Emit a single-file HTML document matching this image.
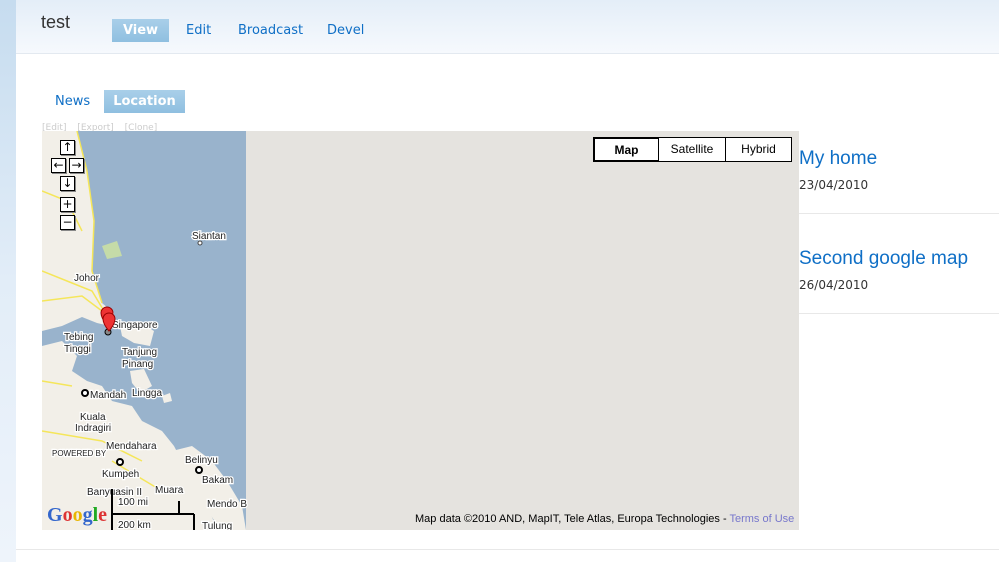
<!DOCTYPE html>
<html><head><meta charset="utf-8"><style>
*{margin:0;padding:0;box-sizing:border-box}
body{width:999px;height:562px;overflow:hidden;background:#fff;font-family:"DejaVu Sans","Liberation Sans",sans-serif;position:relative}
.strip{position:absolute;left:0;top:0;width:16px;height:562px;background:linear-gradient(#c6dcef,#e2edf8 50%,#eef4fb)}
.head{position:absolute;left:16px;top:0;width:983px;height:54px;background:linear-gradient(#e4eef8,#f6f9fd);border-bottom:1px solid #e3e9f0}
.a{position:absolute;font-size:13px;color:#0f6fc6}
.tab{position:absolute;background:linear-gradient(#a9cfe9,#8fbfe0);color:#fff;font-weight:bold;font-size:13px;text-align:center}
.map{position:absolute;left:42px;top:131px;width:757px;height:399px;background:#e5e3df;overflow:hidden}
.btn{position:absolute;width:15px;height:15px;background:#fff;border:1px solid #000;box-shadow:1px 1px 0 #888;font-size:12px;line-height:13px;text-align:center;font-family:"DejaVu Sans",sans-serif}
.mt{position:absolute;top:6px;height:25px;background:#fff;border:1px solid #000;font-family:"Liberation Sans",sans-serif;font-size:12px;text-align:center;line-height:22px}
.lbl{font-family:"Liberation Sans",sans-serif;font-size:10px;fill:#222;stroke:#fff;stroke-width:2.5px;paint-order:stroke}
</style></head><body>
<div class="strip"></div>
<div class="head"></div>
<div style="position:absolute;left:41px;top:12px;font-size:18px;color:#333;font-family:'Liberation Sans',sans-serif">test</div>
<div class="tab" style="left:112px;top:19px;width:57px;height:23px;line-height:23px">View</div>
<div class="a" style="left:186px;top:23px">Edit</div>
<div class="a" style="left:238px;top:23px">Broadcast</div>
<div class="a" style="left:327px;top:23px">Devel</div>
<div class="a" style="left:55px;top:94px">News</div>
<div class="tab" style="left:104px;top:90px;width:81px;height:23px;line-height:23px">Location</div>
<div style="position:absolute;left:42px;top:123px;font-size:9px;color:#ccc;word-spacing:8px">[Edit] [Export] [Clone]</div>
<div class="map">
<svg width="757" height="399" style="position:absolute;left:0;top:0">
<rect x="0" y="0" width="204" height="399" fill="#99b3cc"/>
<path d="M0 0 L35 0 L45 40 L52 90 L50 140 L60 172 L72 182 L68 195 L55 192 L40 186 L20 195 L0 200Z" fill="#f2efe8"/>
<path d="M0 215 L20 210 L35 225 L30 240 L45 250 L60 255 L70 270 L90 275 L100 290 L120 300 L132 315 L145 340 L160 360 L175 399 L0 399Z" fill="#f2efe8"/>
<path d="M130 320 L150 315 L170 330 L185 350 L200 375 L204 399 L178 399 L160 370 L140 345Z" fill="#f2efe8"/>
<path d="M78 195 L95 190 L112 200 L108 215 L92 212 L80 205Z M88 240 L102 238 L110 255 L98 262 L90 252Z M120 265 L128 262 L130 270 L122 272Z" fill="#f2efe8"/>
<path d="M35 0 L45 40 L52 90 L50 140 L60 172 M0 60 L25 70 L40 100 M0 140 L25 150 L50 160 L65 185 M0 170 L40 165 L60 180 M0 250 L30 255 M0 300 L60 310 L100 330 M70 330 L120 360" stroke="#f5e65a" stroke-width="1.5" fill="none"/>
<path d="M60 115 L75 110 L80 125 L65 128Z" fill="#c5dba8"/>
<text x="10" y="325" class="lbl" style="font-size:8px">POWERED BY</text>
<text x="5" y="390" style="font-family:'Liberation Serif',serif;font-size:20px;font-weight:bold;fill:#3366cc">G<tspan fill="#d33">o</tspan><tspan fill="#e9b500">o</tspan><tspan fill="#3366cc">g</tspan><tspan fill="#2a2">l</tspan><tspan fill="#d33">e</tspan></text>
<text x="32" y="150" class="lbl">Johor</text><text x="70" y="197" class="lbl">Singapore</text>
<text x="22" y="209" class="lbl">Tebing</text><text x="22" y="221" class="lbl">Tinggi</text>
<text x="80" y="224" class="lbl">Tanjung</text><text x="80" y="236" class="lbl">Pinang</text>
<text x="48" y="267" class="lbl">Mandah</text><text x="90" y="265" class="lbl">Lingga</text>
<text x="38" y="289" class="lbl">Kuala</text><text x="33" y="300" class="lbl">Indragiri</text>
<text x="64" y="318" class="lbl">Mendahara</text><text x="60" y="346" class="lbl">Kumpeh</text>
<text x="143" y="332" class="lbl">Belinyu</text><text x="160" y="352" class="lbl">Bakam</text>
<text x="45" y="364" class="lbl">Banyuasin II</text><text x="113" y="362" class="lbl">Muara</text>
<text x="165" y="376" class="lbl">Mendo B</text><text x="160" y="398" class="lbl">Tulung</text>
<text x="150" y="108" class="lbl">Siantan</text>
<circle cx="158" cy="112" r="2" fill="#fff" stroke="#444"/>
<circle cx="43" cy="262" r="3" fill="#fff" stroke="#000" stroke-width="2"/>
<circle cx="78" cy="331" r="3" fill="#fff" stroke="#000" stroke-width="2"/>
<circle cx="157" cy="339" r="3" fill="#fff" stroke="#000" stroke-width="2"/>
<path d="M70 358 V399 M70 383 H152 M137 370 V383 M152 383 V399" stroke="#000" stroke-width="2" fill="none"/>
<text x="76" y="374" class="lbl">100 mi</text><text x="76" y="397" class="lbl">200 km</text>
<circle cx="66" cy="201" r="3" fill="#888" stroke="#000"/>
<path d="M59 182 a6 6 0 1 1 12 0 q0 5 -6 12 q-6 -7 -6 -12Z" fill="#e33" stroke="#900"/>
<path d="M61 188 a6 6 0 1 1 12 0 q0 5 -6 12 q-6 -7 -6 -12Z" fill="#e33" stroke="#900"/>
</svg>
<div class="btn" style="left:18px;top:9px">↑</div>
<div class="btn" style="left:9px;top:27px">←</div>
<div class="btn" style="left:27px;top:27px">→</div>
<div class="btn" style="left:18px;top:45px">↓</div>
<div class="btn" style="left:18px;top:66px">+</div>
<div class="btn" style="left:18px;top:84px">−</div>
<div class="mt" style="left:551px;width:67px;font-weight:bold;border:2px solid #000;border-right-color:#335">Map</div>
<div class="mt" style="left:616px;width:68px">Satellite</div>
<div class="mt" style="left:683px;width:67px">Hybrid</div>
<div style="position:absolute;left:373px;top:382px;font-family:'Liberation Sans',sans-serif;font-size:11px;color:#000">Map data ©2010 AND, MapIT, Tele Atlas, Europa Technologies - <span style="color:#77c">Terms of Use</span></div>
</div>
<div style="position:absolute;left:799px;top:148px;font-size:19px;color:#0f6fc6;font-family:'Liberation Sans',sans-serif">My home</div>
<div style="position:absolute;left:799px;top:178px;font-size:12px;color:#333">23/04/2010</div>
<div style="position:absolute;left:799px;top:213px;width:200px;border-top:1px solid #e8e8e8"></div>
<div style="position:absolute;left:799px;top:248px;font-size:19px;color:#0f6fc6;font-family:'Liberation Sans',sans-serif">Second google map</div>
<div style="position:absolute;left:799px;top:278px;font-size:12px;color:#333">26/04/2010</div>
<div style="position:absolute;left:799px;top:313px;width:200px;border-top:1px solid #e8e8e8"></div>
<div style="position:absolute;left:16px;top:549px;width:983px;border-top:1px solid #e8e8e8"></div>
</body></html>
